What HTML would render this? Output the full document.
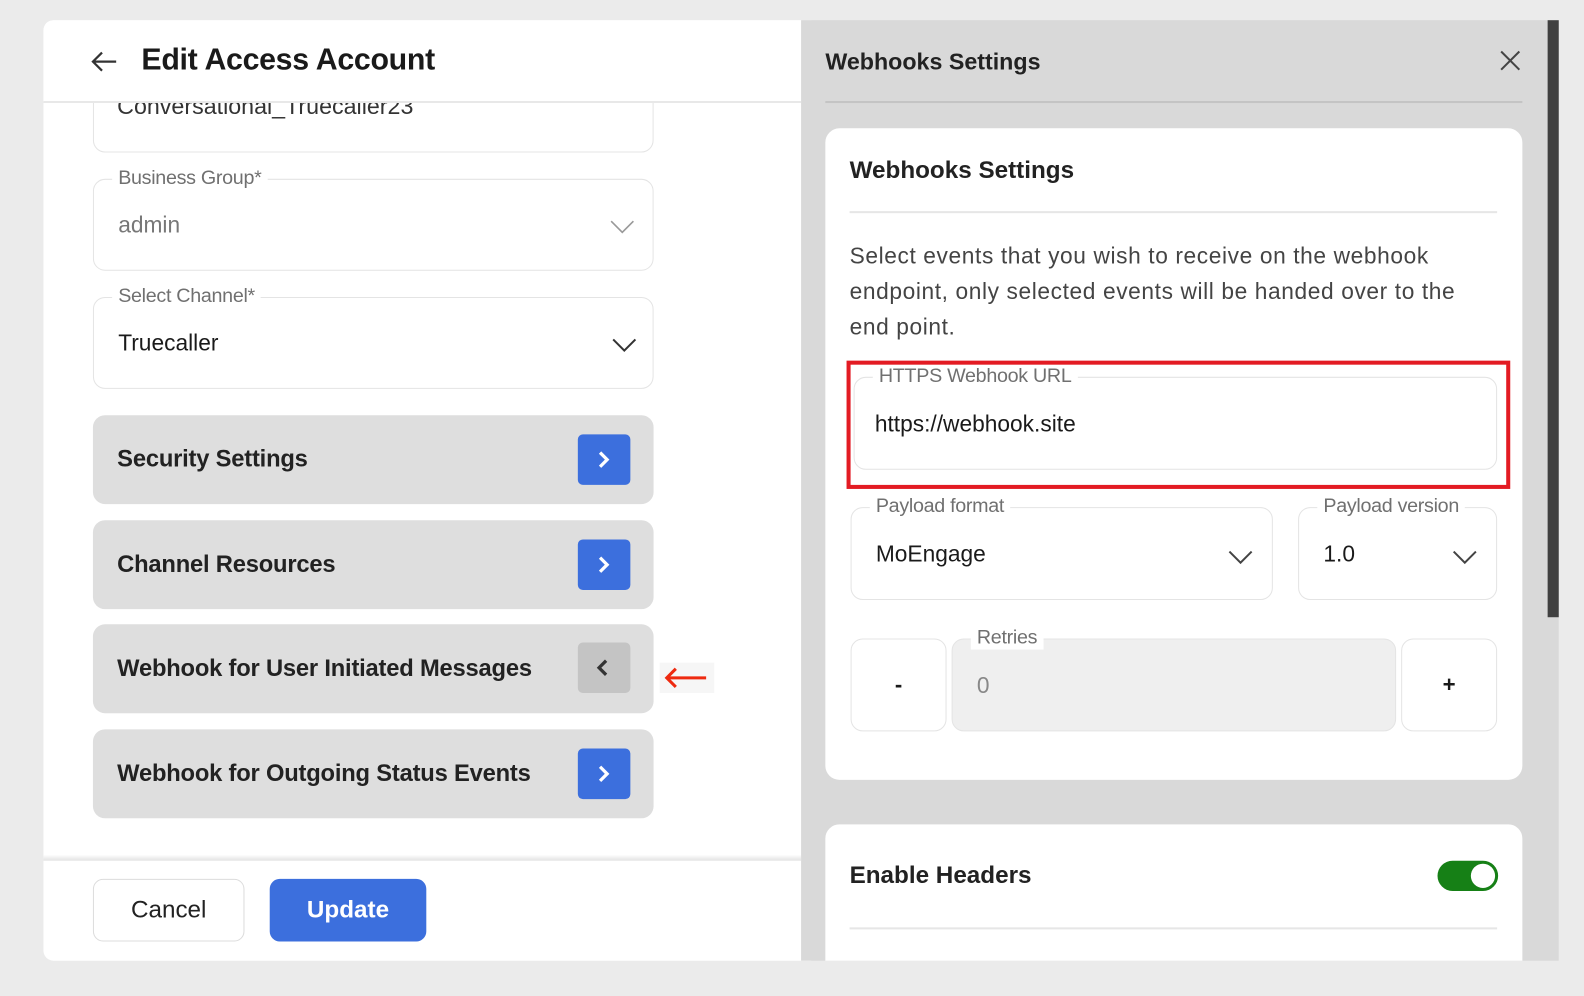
<!DOCTYPE html>
<html><head><meta charset="utf-8"><style>
*{box-sizing:border-box;margin:0;padding:0}
body{width:1584px;height:996px;background:#ebebeb;font-family:"Liberation Sans",sans-serif;position:relative;overflow:hidden;color:#1a1a1a}
#w{position:absolute;left:0;top:0;width:1568px;height:986px;transform:scale(1.0102);transform-origin:0 0}
.a{position:absolute}
.fld{position:absolute;border:1.5px solid #e4e4e4;border-radius:12px;background:#fff}
.lbl{position:absolute;top:-13px;left:18px;padding:0 6px;background:#fff;color:#707070;font-size:19.5px;letter-spacing:-0.3px}
.val{position:absolute;left:24px;font-size:22.5px}
.row{position:absolute;left:92px;width:555px;height:88px;background:#dedede;border-radius:12px}
.row .t{position:absolute;left:24px;top:30px;font-size:23.5px;font-weight:bold;color:#222;letter-spacing:-0.2px}
.row .b{position:absolute;left:480px;top:19px;width:52px;height:50px;border-radius:5px;background:#3c6fdd}
</style></head><body><div id="w">
<div class="a" style="left:43px;top:20px;width:760px;height:931px;background:#fff;border-radius:10px 0 0 10px"></div>
<div class="fld" style="left:92px;top:70px;width:555px;height:81px"></div>
<div class="a" style="left:116px;top:92px;font-size:23px;color:#333">Conversational_Truecaller23</div>
<div class="a" style="left:43px;top:20px;width:750px;height:82px;background:#fff;border-bottom:2px solid #e8e8e8;border-radius:10px 0 0 0"></div>
<svg class="a" style="left:88px;top:48px" width="30" height="26" viewBox="0 0 30 26"><path d="M27 13H4M13 4L4 13l9 9" fill="none" stroke="#333" stroke-width="2.2"/></svg>
<div class="a" style="left:140px;top:43px;font-size:30px;font-weight:bold;color:#1a1a1a;letter-spacing:-0.3px">Edit Access Account</div>
<div class="fld" style="left:92px;top:177px;width:555px;height:91px"><span class="lbl">Business Group*</span><span class="val" style="top:32px;color:#777">admin</span>
<svg class="a" style="left:510px;top:38px" width="26" height="16" viewBox="0 0 26 16"><path d="M2 3l11 11L24 3" fill="none" stroke="#999" stroke-width="1.6"/></svg></div>
<div class="fld" style="left:92px;top:294px;width:555px;height:91px"><span class="lbl">Select Channel*</span><span class="val" style="top:32px;color:#1a1a1a">Truecaller</span>
<svg class="a" style="left:512px;top:38px" width="26" height="16" viewBox="0 0 26 16"><path d="M2 3l11 11L24 3" fill="none" stroke="#333" stroke-width="2"/></svg></div>
<div class="row" style="top:411px"><span class="t">Security Settings</span><div class="b"><svg width="52" height="50"><path d="M22 18l7 7-7 7" fill="none" stroke="#fff" stroke-width="3.2"/></svg></div></div>
<div class="row" style="top:515px"><span class="t">Channel Resources</span><div class="b"><svg width="52" height="50"><path d="M22 18l7 7-7 7" fill="none" stroke="#fff" stroke-width="3.2"/></svg></div></div>
<div class="row" style="top:618px"><span class="t">Webhook for User Initiated Messages</span><div class="b" style="top:18px;background:#c4c4c4"><svg width="52" height="50"><path d="M28 18l-7 7 7 7" fill="none" stroke="#333" stroke-width="3.2"/></svg></div></div>
<div class="row" style="top:722px"><span class="t">Webhook for Outgoing Status Events</span><div class="b"><svg width="52" height="50"><path d="M22 18l7 7-7 7" fill="none" stroke="#fff" stroke-width="3.2"/></svg></div></div>
<div class="a" style="left:653px;top:656px;width:54px;height:30px;background:#f6f6f6"></div>
<svg class="a" style="left:653px;top:656px" width="54" height="30"><path d="M46 15H7M16 6L7 15l9 9" fill="none" stroke="#ee2a10" stroke-width="3"/></svg>
<div class="a" style="left:43px;top:846px;width:750px;height:6px;background:linear-gradient(#fff,#e2e2e2)"></div>
<div class="a" style="left:92px;top:870px;width:150px;height:62px;border:1.5px solid #dcdcdc;border-radius:10px;font-size:24px;text-align:center;line-height:60px;color:#222">Cancel</div>
<div class="a" style="left:267px;top:870px;width:155px;height:62px;background:#3c6fdd;border-radius:10px;font-size:24px;font-weight:bold;text-align:center;line-height:62px;color:#fff">Update</div>
<div class="a" style="left:793px;top:20px;width:750px;height:931px;background:#d9d9d9"></div>
<div class="a" style="left:1532px;top:20px;width:11px;height:591px;background:#404040"></div>
<div class="a" style="left:817px;top:48px;font-size:23px;font-weight:bold;color:#222">Webhooks Settings</div>
<svg class="a" style="left:1484px;top:49px" width="22" height="22"><path d="M2 2l18 18M20 2L2 20" stroke="#444" stroke-width="2"/></svg>
<div class="a" style="left:817px;top:100px;width:690px;height:2px;background:#c4c4c4"></div>
<div class="a" style="left:817px;top:127px;width:690px;height:645px;background:#fff;border-radius:14px"></div>
<div class="a" style="left:841px;top:155px;font-size:24px;font-weight:bold;color:#222">Webhooks Settings</div>
<div class="a" style="left:841px;top:209px;width:641px;height:2px;background:#e6e6e6"></div>
<div class="a" style="left:841px;top:236px;width:625px;font-size:22.5px;letter-spacing:0.6px;line-height:35px;color:#444">Select events that you wish to receive on the webhook endpoint, only selected events will be handed over to the end point.</div>
<div class="fld" style="left:845px;top:373px;width:637px;height:92px"><span class="lbl">HTTPS Webhook URL</span><span class="val" style="top:33px;left:20px">https://webhook.site</span></div>
<div class="a" style="left:838px;top:357px;width:657px;height:127px;border:4px solid #e31b23"></div>
<div class="fld" style="left:842px;top:502px;width:418px;height:92px"><span class="lbl">Payload format</span><span class="val" style="top:33px">MoEngage</span>
<svg class="a" style="left:372px;top:40px" width="26" height="16" viewBox="0 0 26 16"><path d="M2 3l11 11L24 3" fill="none" stroke="#444" stroke-width="2"/></svg></div>
<div class="fld" style="left:1285px;top:502px;width:197px;height:92px"><span class="lbl">Payload version</span><span class="val" style="top:33px">1.0</span>
<svg class="a" style="left:151px;top:40px" width="26" height="16" viewBox="0 0 26 16"><path d="M2 3l11 11L24 3" fill="none" stroke="#444" stroke-width="2"/></svg></div>
<div class="fld" style="left:842px;top:632px;width:95px;height:92px;text-align:center;line-height:90px;font-size:22px;font-weight:bold">-</div>
<div class="fld" style="left:942px;top:632px;width:440px;height:92px;background:#efefef"><span class="lbl" style="background:#fff;top:-13px">Retries</span><span class="val" style="top:33px;color:#888">0</span></div>
<div class="fld" style="left:1387px;top:632px;width:95px;height:92px;text-align:center;line-height:90px;font-size:22px;font-weight:bold">+</div>
<div class="a" style="left:817px;top:816px;width:690px;height:135px;background:#fff;border-radius:14px 14px 0 0"></div>
<div class="a" style="left:841px;top:853px;font-size:24px;font-weight:bold;color:#222">Enable Headers</div>
<div class="a" style="left:1423px;top:852px;width:60px;height:30px;background:#168016;border-radius:15px"></div>
<div class="a" style="left:1456px;top:855px;width:24px;height:24px;background:#fff;border-radius:50%"></div>
<div class="a" style="left:841px;top:918px;width:641px;height:2px;background:#e6e6e6"></div>
</div></body></html>
